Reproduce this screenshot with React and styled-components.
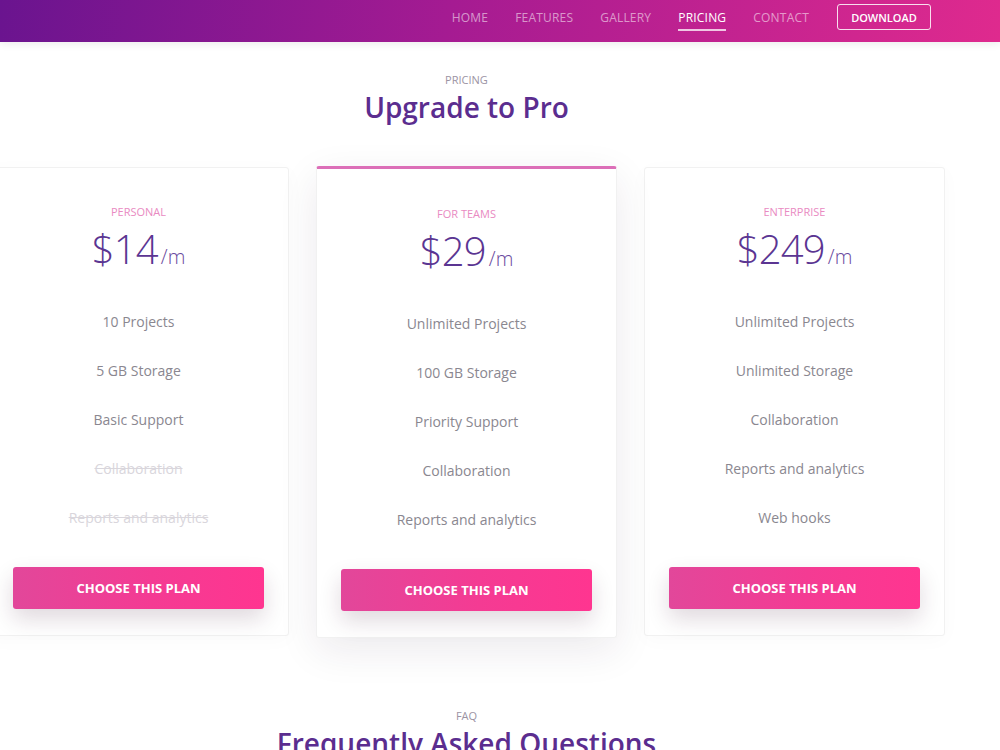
import React from "react";
import styled, { createGlobalStyle } from "styled-components";

const Global = createGlobalStyle`
  html, body { margin: 0; padding: 0; background: #fff; }
  body { font-family: "Open Sans", "Noto Sans", sans-serif; overflow-x: hidden; }
  * { box-sizing: border-box; }
`;

const Header = styled.header`
  height: 42px;
  background: linear-gradient(100deg, #6a148f 0%, #a51b92 45%, #df2a8e 100%);
  box-shadow: 0 2px 8px rgba(0,0,0,0.08);
  display: flex;
  justify-content: flex-end;
  align-items: center;
  padding-right: 69px;
  position: relative;
  z-index: 2;
`;

const Nav = styled.nav`
  display: flex;
  align-items: center;
  gap: 27px;
`;

const NavLink = styled.a`
  font-size: 12px;
  line-height: 14px;
  font-weight: 500;
  letter-spacing: 0.2px;
  text-transform: uppercase;
  text-decoration: none;
  color: ${p => (p.$active ? "#fff" : "rgba(255,255,255,0.55)")};
  padding: 0 0 4px;
  border-bottom: 2px solid ${p => (p.$active ? "rgba(255,255,255,0.75)" : "transparent")};
`;

const DownloadButton = styled.a`
  margin-left: 1px;
  width: 94px;
  height: 26px;
  border: 1px solid rgba(255,255,255,0.85);
  border-radius: 3px;
  color: #fff;
  font-size: 11px;
  font-weight: 600;
  text-decoration: none;
  display: flex;
  align-items: center;
  justify-content: center;
  margin-bottom: 8px;
  text-transform: uppercase;
`;

const Section = styled.section`
  width: 957px;
  margin-left: -12px;
  display: flex;
  flex-direction: column;
  align-items: center;
  padding-top: ${p => p.$top || 0}px;
`;

const Eyebrow = styled.div`
  font-size: 11px;
  line-height: 14px;
  color: #9b93a3;
  text-transform: uppercase;
`;

const Title = styled.h2`
  margin: 2px 0 0;
  font-size: 28px;
  line-height: 36px;
  font-weight: 600;
  color: #5b2d8f;
  white-space: nowrap;
`;

const Cards = styled.div`
  display: grid;
  grid-template-columns: repeat(3, 301px);
  gap: 27px;
  align-items: start;
  margin-top: 42px;
  width: 100%;
`;

const Card = styled.div`
  background: #fff;
  border: 1px solid #f1f1f1;
  border-top: ${p => (p.$featured ? "3px solid #dc6fb8" : "1px solid #f1f1f1")};
  border-radius: 3px;
  padding: ${p => (p.$featured ? "38px 24px 26px" : "37px 24px 26px")};
  margin-top: ${p => (p.$featured ? "-1px" : "0")};
  box-shadow: ${p => (p.$featured ? "0 12px 40px rgba(40,20,60,0.09)" : "0 4px 20px rgba(0,0,0,0.025)")};
  display: flex;
  flex-direction: column;
  align-items: center;
  position: relative;
  z-index: ${p => (p.$featured ? 1 : 0)};
`;

const PlanName = styled.div`
  font-size: 11px;
  line-height: 14px;
  color: #e98ac2;
  text-transform: uppercase;
`;

const Price = styled.div`
  margin-top: 6px;
  height: 48px;
  display: flex;
  align-items: baseline;
  color: #5b3592;
  font-weight: 300;
`;

const Amount = styled.span`
  font-size: 40px;
  line-height: 48px;
  letter-spacing: -0.8px;
`;

const Per = styled.span`
  font-size: 20px;
  margin-left: 3px;
  color: #6a4a9e;
`;

const Features = styled.ul`
  list-style: none;
  margin: 24px 0 0;
  padding: 0;
  width: 100%;
`;

const Feature = styled.li`
  height: 49px;
  display: flex;
  align-items: center;
  justify-content: center;
  font-size: 14px;
  color: ${p => (p.$off ? "#d9d6dc" : "#8a8790")};
  text-decoration: ${p => (p.$off ? "line-through" : "none")};
`;

const PlanButton = styled.button`
  margin-top: 25px;
  width: 100%;
  height: 42px;
  border: 0;
  border-radius: 3px;
  background: linear-gradient(90deg, #e2479a 0%, #f43b93 55%, #ff3590 100%);
  box-shadow: 0 10px 22px rgba(60, 20, 50, 0.16);
  color: #fff;
  font-family: inherit;
  font-size: 13px;
  font-weight: 700;
  text-transform: uppercase;
  cursor: pointer;
`;

const plans = [
  {
    name: "Personal",
    price: "$14",
    features: [
      ["10 Projects"],
      ["5 GB Storage"],
      ["Basic Support"],
      ["Collaboration", true],
      ["Reports and analytics", true],
    ],
  },
  {
    name: "For Teams",
    price: "$29",
    featured: true,
    features: [
      ["Unlimited Projects"],
      ["100 GB Storage"],
      ["Priority Support"],
      ["Collaboration"],
      ["Reports and analytics"],
    ],
  },
  {
    name: "Enterprise",
    price: "$249",
    features: [
      ["Unlimited Projects"],
      ["Unlimited Storage"],
      ["Collaboration"],
      ["Reports and analytics"],
      ["Web hooks"],
    ],
  },
];

const navItems = ["Home", "Features", "Gallery", "Pricing", "Contact"];

export default function App() {
  return (
    <>
      <Global />
      <Header>
        <Nav>
          {navItems.map(n => (
            <NavLink key={n} href="#" $active={n === "Pricing"}>{n}</NavLink>
          ))}
          <DownloadButton href="#">Download</DownloadButton>
        </Nav>
      </Header>
      <Section $top={31}>
        <Eyebrow>Pricing</Eyebrow>
        <Title>Upgrade to Pro</Title>
        <Cards>
          {plans.map(p => (
            <Card key={p.name} $featured={p.featured}>
              <PlanName>{p.name}</PlanName>
              <Price>
                <Amount>{p.price}</Amount>
                <Per>/m</Per>
              </Price>
              <Features>
                {p.features.map(([f, off]) => (
                  <Feature key={f} $off={off}>{f}</Feature>
                ))}
              </Features>
              <PlanButton>Choose this plan</PlanButton>
            </Card>
          ))}
        </Cards>
      </Section>
      <Section $top={71}>
        <Eyebrow>FAQ</Eyebrow>
        <Title>Frequently Asked Questions</Title>
      </Section>
    </>
  );
}
